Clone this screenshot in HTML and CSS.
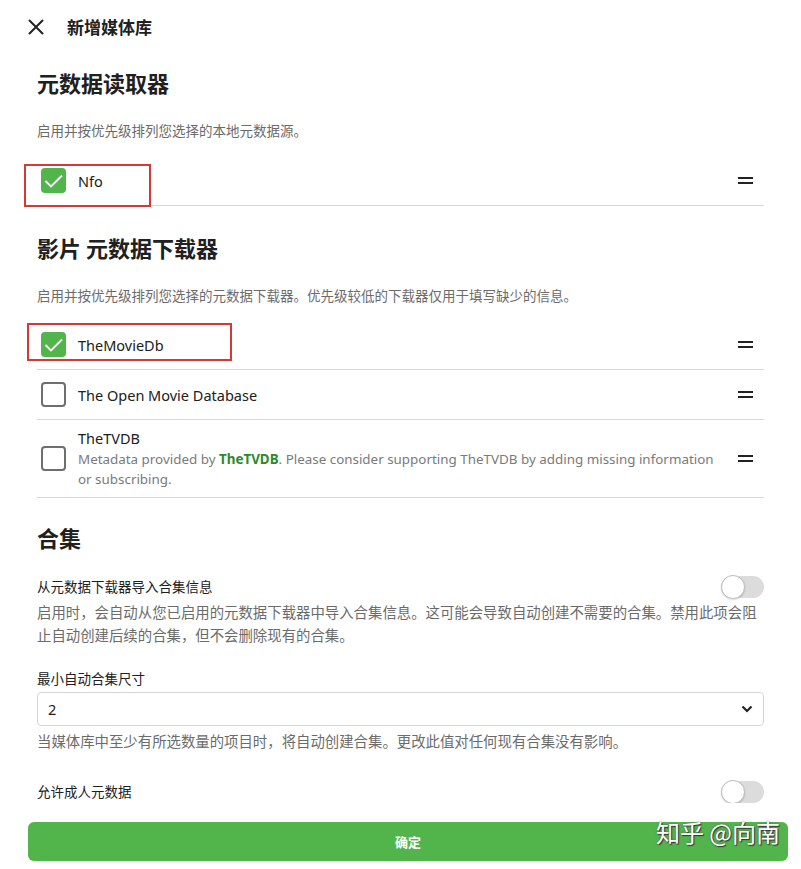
FILE: index.html
```html
<!DOCTYPE html>
<html lang="zh">
<head>
<meta charset="utf-8">
<link rel="stylesheet" href="styles.css">
</head>
<body>
<div class="page">
  <div class="scroll">
    <header class="header">
      <svg class="close" width="18" height="18" viewBox="0 0 18 18"><path d="M2 2 L16 16 M16 2 L2 16" stroke="#222" stroke-width="2" fill="none"/></svg>
      <div class="title">新增媒体库</div>
    </header>
    <div class="content">
      <h2 class="h2 first">元数据读取器</h2>
      <div class="desc d1">启用并按优先级排列您选择的本地元数据源。</div>
      <div class="list">
        <div class="row">
          <span class="cb checked"><svg width="25" height="25" viewBox="0 0 25 25"><path d="M4.5 13 L10 18.5 L21 7.5" stroke="#fff" stroke-width="1.8" fill="none"/></svg></span>
          <div class="rowtext"><div class="rowtitle">Nfo</div></div>
          <span class="handle"></span>
          <span class="mark mark1"></span>
        </div>
      </div>

      <h2 class="h2 second">影片 元数据下载器</h2>
      <div class="desc d2">启用并按优先级排列您选择的元数据下载器。优先级较低的下载器仅用于填写缺少的信息。</div>
      <div class="list">
        <div class="row">
          <span class="cb checked"><svg width="25" height="25" viewBox="0 0 25 25"><path d="M4.5 13 L10 18.5 L21 7.5" stroke="#fff" stroke-width="1.8" fill="none"/></svg></span>
          <div class="rowtext"><div class="rowtitle">TheMovieDb</div></div>
          <span class="handle"></span>
          <span class="mark mark2"></span>
        </div>
        <div class="row">
          <span class="cb"></span>
          <div class="rowtext"><div class="rowtitle">The Open Movie Database</div></div>
          <span class="handle"></span>
        </div>
        <div class="row tall">
          <span class="cb"></span>
          <div class="rowtext">
            <div class="rowtitle">TheTVDB</div>
            <div class="rowdesc">Metadata provided by <span class="link">TheTVDB</span>. Please consider supporting TheTVDB by adding missing information or subscribing.</div>
          </div>
          <span class="handle"></span>
        </div>
      </div>

      <h2 class="h2 h2c">合集</h2>
      <div class="field">
        <div class="togglerow">
          <div class="label">从元数据下载器导入合集信息</div>
          <span class="toggle"></span>
        </div>
        <div class="desc2">启用时，会自动从您已启用的元数据下载器中导入合集信息。这可能会导致自动创建不需要的合集。禁用此项会阻止自动创建后续的合集，但不会删除现有的合集。</div>
      </div>
      <div class="field f2">
        <div class="label">最小自动合集尺寸</div>
        <div class="select">
          <span>2</span>
          <svg width="12" height="8" viewBox="0 0 12 8"><path d="M1.5 1.5 L6 6 L10.5 1.5" stroke="#222" stroke-width="2.2" fill="none"/></svg>
        </div>
        <div class="desc3">当媒体库中至少有所选数量的项目时，将自动创建合集。更改此值对任何现有合集没有影响。</div>
      </div>
      <div class="field f3">
        <div class="togglerow">
          <div class="label">允许成人元数据</div>
          <span class="toggle"></span>
        </div>
      </div>
    </div>
  </div>
  <footer class="footer">
    <button class="btn">确定</button>
    <span class="watermark">知乎 @向南</span>
  </footer>
</div>
</body>
</html>
```

FILE: styles.css
```css
html, body {
  margin: 0;
  padding: 0;
  background: #fff;
}
body {
  font-family: "Noto Sans", "Noto Sans CJK SC", sans-serif;
  color: #202020;
}
.page {
  width: 801px;
  height: 869px;
  display: flex;
  flex-direction: column;
  overflow: hidden;
}
.scroll {
  height: 803px;
  overflow: hidden;
  flex: none;
}
.header {
  height: 54px;
  display: flex;
  align-items: center;
  padding-left: 27px;
  gap: 22px;
}
.close {
  display: block;
}
.title {
  font-size: 17px;
  font-weight: 700;
  line-height: 24px;
  font-family: "Noto Sans CJK SC", sans-serif;
}
.content {
  padding: 0 37px;
}
.h2 {
  margin: 0;
  font-size: 22px;
  line-height: 30px;
  font-weight: 700;
  font-family: "Noto Sans CJK SC", sans-serif;
}
.h2.first {
  margin-top: 13px;
}
.h2.second {
  margin-top: 26px;
}
.h2.h2c {
  margin-top: 24px;
}
.desc {
  margin-top: 23px;
  font-size: 13.5px;
  line-height: 20px;
  color: #6b6b6b;
  font-family: "Noto Sans CJK SC", sans-serif;
}
.d1 {
  margin-bottom: 16px;
}
.d2 {
  margin-bottom: 15px;
}
.list {
  display: flex;
  flex-direction: column;
}
.row {
  position: relative;
  height: 49px;
  border-bottom: 1px solid #d9d9d9;
  display: flex;
  align-items: center;
}
.row.tall {
  height: 77px;
}
.cb {
  flex: none;
  width: 25px;
  height: 25px;
  box-sizing: border-box;
  border: 2px solid #6e6e6e;
  border-radius: 4px;
  margin-left: 4px;
  display: flex;
  align-items: center;
  justify-content: center;
}
.cb.checked {
  background: #52b54b;
  border: none;
}
.cb svg {
  display: block;
}
.rowtext {
  flex: 1;
  margin-left: 12px;
  margin-right: 14px;
}
.rowtitle {
  font-size: 14.5px;
  line-height: 20px;
  color: #202020;
}
.rowdesc {
  font-size: 13.4px;
  line-height: 20px;
  color: #7a7a7a;
  margin-top: 1px;
}
.link {
  color: #2d8a27;
  font-weight: 700;
}
.handle {
  flex: none;
  width: 15px;
  height: 7px;
  box-sizing: border-box;
  border-top: 2px solid #222;
  border-bottom: 2px solid #222;
  margin-right: 11px;
}
.mark {
  position: absolute;
  border: 2px solid #d33a35;
  box-sizing: border-box;
  pointer-events: none;
}
.mark1 {
  left: -13px;
  top: 8px;
  width: 127px;
  height: 43px;
}
.mark2 {
  left: -10px;
  top: 3px;
  width: 205px;
  height: 38px;
}
.field {
  margin-top: 24px;
}
.f2 {
  margin-top: 22px;
}
.f3 {
  margin-top: 30px;
}
.togglerow {
  display: flex;
  align-items: center;
  justify-content: space-between;
  height: 20px;
}
.label {
  font-size: 13.5px;
  line-height: 20px;
  color: #202020;
  font-family: "Noto Sans CJK SC", sans-serif;
}
.toggle {
  position: relative;
  width: 43px;
  height: 22px;
  border-radius: 11px;
  background: #dcdcdc;
  flex: none;
  margin-top: 2px;
}
.toggle::after {
  content: "";
  position: absolute;
  left: 0;
  top: -1px;
  width: 24px;
  height: 24px;
  box-sizing: border-box;
  border-radius: 50%;
  background: #fff;
  border: 1px solid #bdbdbd;
  box-shadow: 0 1px 2px rgba(0,0,0,0.15);
}
.desc2 {
  margin-top: 4px;
  font-size: 14.4px;
  line-height: 23px;
  color: #6b6b6b;
  font-family: "Noto Sans CJK SC", sans-serif;
}
.select {
  margin-top: 4px;
  height: 34px;
  box-sizing: border-box;
  border: 1px solid #d6d6d6;
  border-radius: 4px;
  display: flex;
  align-items: center;
  justify-content: space-between;
  padding: 0 10px 0 10px;
  font-size: 14.5px;
  color: #202020;
}
.desc3 {
  margin-top: 5px;
  font-size: 14.4px;
  line-height: 20px;
  color: #6b6b6b;
  font-family: "Noto Sans CJK SC", sans-serif;
}
.footer {
  position: relative;
  flex: 1;
  padding: 19px 13px 0 28px;
}
.btn {
  display: block;
  width: 760px;
  height: 39px;
  border: none;
  border-radius: 6px;
  background: #52b54b;
  color: #fff;
  font-family: "Noto Sans CJK SC", sans-serif;
  font-weight: 700;
  font-size: 13px;
  padding: 0;
}
.watermark {
  position: absolute;
  right: 21px;
  top: 12px;
  font-size: 24px;
  line-height: 34px;
  color: #fff;
  font-family: "Noto Sans CJK SC", sans-serif;
  text-shadow: 1px 1px 1px #333, 0 0 2px #555;
}
```
